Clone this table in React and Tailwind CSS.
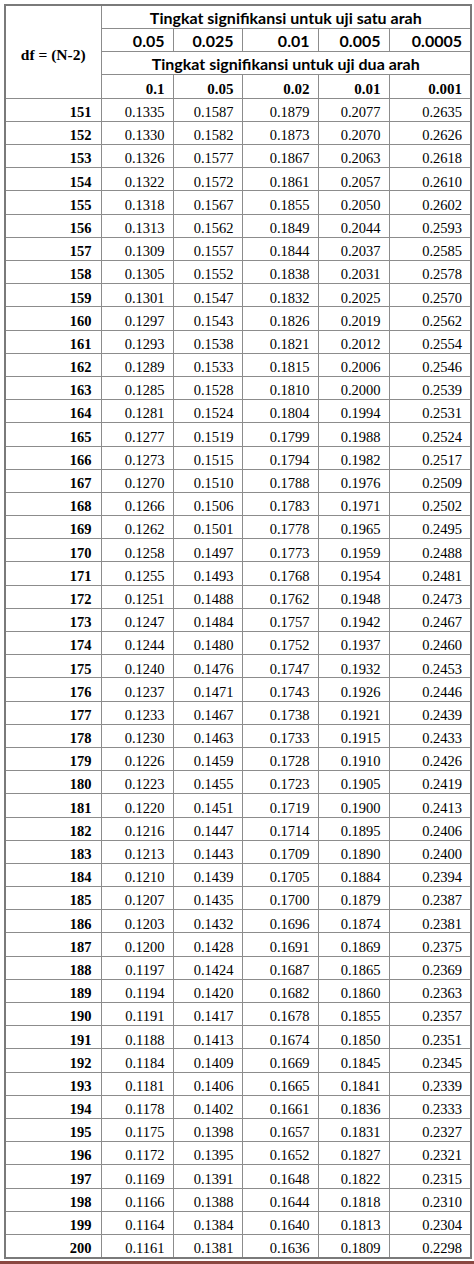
import React from "react";

const RAW = `151 0.1335 0.1587 0.1879 0.2077 0.2635
152 0.1330 0.1582 0.1873 0.2070 0.2626
153 0.1326 0.1577 0.1867 0.2063 0.2618
154 0.1322 0.1572 0.1861 0.2057 0.2610
155 0.1318 0.1567 0.1855 0.2050 0.2602
156 0.1313 0.1562 0.1849 0.2044 0.2593
157 0.1309 0.1557 0.1844 0.2037 0.2585
158 0.1305 0.1552 0.1838 0.2031 0.2578
159 0.1301 0.1547 0.1832 0.2025 0.2570
160 0.1297 0.1543 0.1826 0.2019 0.2562
161 0.1293 0.1538 0.1821 0.2012 0.2554
162 0.1289 0.1533 0.1815 0.2006 0.2546
163 0.1285 0.1528 0.1810 0.2000 0.2539
164 0.1281 0.1524 0.1804 0.1994 0.2531
165 0.1277 0.1519 0.1799 0.1988 0.2524
166 0.1273 0.1515 0.1794 0.1982 0.2517
167 0.1270 0.1510 0.1788 0.1976 0.2509
168 0.1266 0.1506 0.1783 0.1971 0.2502
169 0.1262 0.1501 0.1778 0.1965 0.2495
170 0.1258 0.1497 0.1773 0.1959 0.2488
171 0.1255 0.1493 0.1768 0.1954 0.2481
172 0.1251 0.1488 0.1762 0.1948 0.2473
173 0.1247 0.1484 0.1757 0.1942 0.2467
174 0.1244 0.1480 0.1752 0.1937 0.2460
175 0.1240 0.1476 0.1747 0.1932 0.2453
176 0.1237 0.1471 0.1743 0.1926 0.2446
177 0.1233 0.1467 0.1738 0.1921 0.2439
178 0.1230 0.1463 0.1733 0.1915 0.2433
179 0.1226 0.1459 0.1728 0.1910 0.2426
180 0.1223 0.1455 0.1723 0.1905 0.2419
181 0.1220 0.1451 0.1719 0.1900 0.2413
182 0.1216 0.1447 0.1714 0.1895 0.2406
183 0.1213 0.1443 0.1709 0.1890 0.2400
184 0.1210 0.1439 0.1705 0.1884 0.2394
185 0.1207 0.1435 0.1700 0.1879 0.2387
186 0.1203 0.1432 0.1696 0.1874 0.2381
187 0.1200 0.1428 0.1691 0.1869 0.2375
188 0.1197 0.1424 0.1687 0.1865 0.2369
189 0.1194 0.1420 0.1682 0.1860 0.2363
190 0.1191 0.1417 0.1678 0.1855 0.2357
191 0.1188 0.1413 0.1674 0.1850 0.2351
192 0.1184 0.1409 0.1669 0.1845 0.2345
193 0.1181 0.1406 0.1665 0.1841 0.2339
194 0.1178 0.1402 0.1661 0.1836 0.2333
195 0.1175 0.1398 0.1657 0.1831 0.2327
196 0.1172 0.1395 0.1652 0.1827 0.2321
197 0.1169 0.1391 0.1648 0.1822 0.2315
198 0.1166 0.1388 0.1644 0.1818 0.2310
199 0.1164 0.1384 0.1640 0.1813 0.2304
200 0.1161 0.1381 0.1636 0.1809 0.2298`;

const ROWS = RAW.split("\n").map((l) => l.trim().split(/\s+/));

const cell = "border border-[#8c8c8c] pb-0 pl-0";
const serif = "font-['Liberation_Serif','Times_New_Roman',serif]";
const sans = "font-['Lato','Liberation_Sans',sans-serif]";

export default function App() {
  return (
    <div className="w-[474px] h-[1264px] bg-white flex flex-col">
      <div className="pt-[4px] pl-[4px]">
        <table className="w-[466px] table-fixed border-collapse border-2 border-[#7a7a7a] text-black">
          <colgroup>
            <col className="w-[96px]" />
            <col className="w-[72px]" />
            <col className="w-[69px]" />
            <col className="w-[76px]" />
            <col className="w-[71px]" />
            <col className="w-[82px]" />
          </colgroup>
          <tbody>
            <tr className="h-[23.3px]">
              <td rowSpan={4} className={`${cell} pt-[6px] pr-0 ${serif} text-center font-bold text-[15.5px]`}>
                df = (N-2)
              </td>
              <td colSpan={5} className={`${cell} pt-[2px] pr-0 ${sans} text-center font-bold text-[16px] leading-none`}>
                Tingkat signifikansi untuk uji satu arah
              </td>
            </tr>
            <tr className="h-[23.3px]">
              {["0.05", "0.025", "0.01", "0.005", "0.0005"].map((v) => (
                <td key={v} className={`${cell} pt-[3px] pr-[8px] ${sans} text-right font-bold text-[16px] leading-none`}>
                  {v}
                </td>
              ))}
            </tr>
            <tr className="h-[23.3px]">
              <td colSpan={5} className={`${cell} pt-[2px] pr-0 ${sans} text-center font-bold text-[16px] leading-none`}>
                Tingkat signifikansi untuk uji dua arah
              </td>
            </tr>
            <tr className="h-[23.3px]">
              <td className={`${cell} pt-[5px] pr-[8px] ${serif} text-right font-bold text-[15px] leading-none`}>0.1</td>
              <td className={`${cell} pt-[5px] pr-[8px] ${serif} text-right font-bold text-[15px] leading-none`}>0.05</td>
              <td className={`${cell} pt-[5px] pr-[8px] ${serif} text-right font-bold text-[15px] leading-none`}>0.02</td>
              <td className={`${cell} pt-[5px] pr-[8px] ${serif} text-right font-bold text-[15px] leading-none`}>0.01</td>
              <td className={`${cell} pt-[5px] pr-[8px] ${serif} text-right font-bold text-[15px] leading-none`}>0.001</td>
            </tr>
            {ROWS.map((r) => (
              <tr key={r[0]} className="h-[23.2px]">
                <td className={`${cell} pt-[5px] pr-[9px] ${serif} text-right font-bold text-[14.5px] leading-none`}>
                  {r[0]}
                </td>
                {r.slice(1).map((v, i) => (
                  <td key={i} className={`${cell} pt-[5px] pr-[8px] ${serif} text-right text-[14.5px] leading-none`}>
                    {v}
                  </td>
                ))}
              </tr>
            ))}
          </tbody>
        </table>
      </div>
      <div className="mt-auto h-[3px] bg-[#8a4741]" />
    </div>
  );
}
